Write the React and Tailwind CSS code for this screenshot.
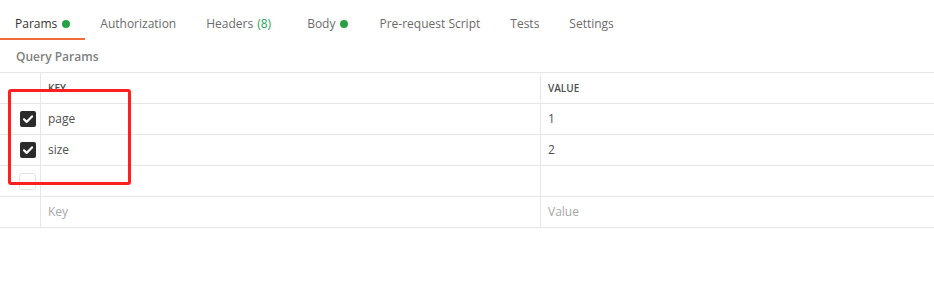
import React from 'react';

const tabs = [
  { label: 'Params', dot: true, active: true },
  { label: 'Authorization' },
  { label: 'Headers', count: '(8)' },
  { label: 'Body', dot: true },
  { label: 'Pre-request Script' },
  { label: 'Tests' },
  { label: 'Settings' },
];

const rows = [
  { checked: true, key: 'page', value: '1' },
  { checked: true, key: 'size', value: '2' },
  { checked: false, key: '', value: '' },
];

function CheckBox({ checked }) {
  if (!checked) {
    return <div className="w-[17px] h-[17px] -ml-px rounded-[3px] border border-[#e3e3e3] bg-white" />;
  }
  return (
    <div className="w-4 h-4 rounded-[2px] bg-[#2b2b2b] flex items-center justify-center">
      <svg viewBox="0 0 16 16" className="w-4 h-4" fill="none" stroke="white" strokeWidth="2.2" strokeLinecap="round" strokeLinejoin="round">
        <path d="M4 8.3l2.6 2.6L12 5.4" />
      </svg>
    </div>
  );
}

export default function App() {
  return (
    <div className="w-[934px] h-[285px] bg-white text-[12px] overflow-hidden" style={{ fontFamily: '"Open Sans", "Liberation Sans", sans-serif' }}>
      {/* Tabs */}
      <div className="flex h-10">
        {tabs.map((tab) => (
          <div
            key={tab.label}
            className={`flex items-start pl-[15px] pt-[16px] pb-[6px] leading-4 border-b-2 ${
              tab.active ? 'border-[#f26b3a] text-[#333333]' : 'border-transparent text-[#6b6b6b]'
            } ${tab.count ? 'pr-[21px]' : tab.dot && !tab.active ? 'pr-[16px]' : 'pr-[15px]'}`}
          >
            <span>{tab.label}</span>
            {tab.count && <span className="ml-1 text-[#26a65b]">{tab.count}</span>}
            {tab.dot && <span className="ml-[5px] mt-[4px] w-2 h-2 rounded-full bg-[#26a144]" />}
          </div>
        ))}
      </div>

      {/* Query Params label */}
      <div className="h-8 flex items-center pl-4 pt-[2px] font-semibold text-[#808080] leading-4">
        Query Params
      </div>

      {/* Table */}
      <div className="relative border-t border-[#e6e6e6]">
        <div className="grid grid-cols-[41px_500px_1fr] h-[31px] border-b border-[#e6e6e6]">
          <div className="border-r border-[#e6e6e6]" />
          <div className="border-r border-[#e6e6e6] flex items-center pl-[7px] text-[10px] font-semibold text-[#505050]">KEY</div>
          <div className="flex items-center pl-[7px] text-[10px] font-semibold text-[#505050]">VALUE</div>
        </div>
        {rows.map((row, i) => (
          <div key={i} className="grid grid-cols-[41px_500px_1fr] h-[31px] border-b border-[#e6e6e6]">
            <div className="border-r border-[#e6e6e6] flex items-center pl-5">
              <CheckBox checked={row.checked} />
            </div>
            <div className="border-r border-[#e6e6e6] flex items-center pl-[7px] text-[#505050]">{row.key}</div>
            <div className="flex items-center pl-[7px] text-[#505050]">{row.value}</div>
          </div>
        ))}
        <div className="grid grid-cols-[41px_500px_1fr] h-[31px] border-b border-[#e6e6e6]">
          <div className="border-r border-[#e6e6e6]" />
          <div className="border-r border-[#e6e6e6] flex items-center pl-[7px] text-[#a8a8a8]">Key</div>
          <div className="flex items-center pl-[7px] text-[#a8a8a8]">Value</div>
        </div>

        {/* red highlight box */}
        <div className="absolute left-2 top-4 w-[123px] h-[96px] border-[3px] border-[#ff1f1f] rounded-[3px]" />
      </div>
    </div>
  );
}
